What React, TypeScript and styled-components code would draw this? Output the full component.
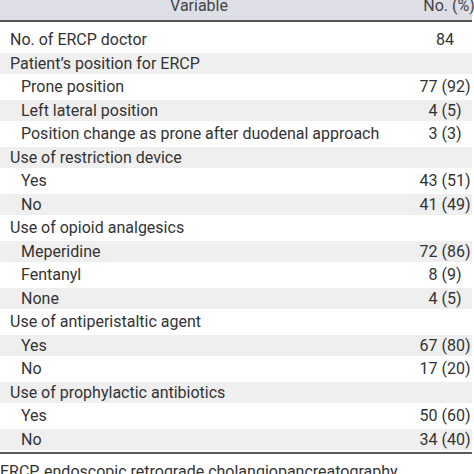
import React from "react";
import styled, { createGlobalStyle } from "styled-components";

const Global = createGlobalStyle`
  html, body {
    margin: 0;
    padding: 0;
    background: #fff;
    overflow: hidden;
  }
  body {
    font-family: Roboto, "Liberation Sans", sans-serif;
    color: #333;
  }
`;

const TableWrapper = styled.div`
  width: 472px;
  margin-top: -9px;
`;

const HeaderRow = styled.div`
  display: flex;
  align-items: center;
  height: 29px;
  background: #dedee6;
  border-bottom: 2px solid #555;
  font-size: 16px;
  color: #444;
`;

const HeaderLabel = styled.div`
  flex: 1;
  text-align: center;
  padding-right: 24px;
`;

const HeaderValue = styled.div`
  width: 54px;
  margin-right: -4px;
  text-align: center;
  white-space: nowrap;
`;

const Body = styled.div`
  padding-top: 5px;
  padding-bottom: 2px;
  border-bottom: 2px solid #5a5a5a;
`;

const Row = styled.div<{ $shade: boolean }>`
  display: flex;
  align-items: center;
  height: 21.5px;
  border-top: 2px solid #fff;
  background: ${(p) => (p.$shade ? "#efefef" : "#fff")};
  font-size: 16px;
`;

const Label = styled.div<{ $indent: boolean }>`
  flex: 1;
  padding-left: ${(p) => (p.$indent ? "21px" : "10px")};
  white-space: nowrap;
`;

const Value = styled.div`
  width: 54px;
  text-align: center;
  white-space: nowrap;
`;

const Footnote = styled.div`
  margin-top: 8px;
  font-size: 16px;
  color: #333;
  white-space: nowrap;
`;

const rows: [string, string, boolean][] = [
  ["No. of ERCP doctor", "84", false],
  ["Patient\u2019s position for ERCP", "", false],
  ["Prone position", "77 (92)", true],
  ["Left lateral position", "4 (5)", true],
  ["Position change as prone after duodenal approach", "3 (3)", true],
  ["Use of restriction device", "", false],
  ["Yes", "43 (51)", true],
  ["No", "41 (49)", true],
  ["Use of opioid analgesics", "", false],
  ["Meperidine", "72 (86)", true],
  ["Fentanyl", "8 (9)", true],
  ["None", "4 (5)", true],
  ["Use of antiperistaltic agent", "", false],
  ["Yes", "67 (80)", true],
  ["No", "17 (20)", true],
  ["Use of prophylactic antibiotics", "", false],
  ["Yes", "50 (60)", true],
  ["No", "34 (40)", true],
];

export default function App() {
  return (
    <>
      <Global />
      <TableWrapper>
        <HeaderRow>
          <HeaderLabel>Variable</HeaderLabel>
          <HeaderValue>No. (%)</HeaderValue>
        </HeaderRow>
        <Body>
          {rows.map(([label, value, indent], i) => (
            <Row key={i} $shade={i % 2 === 1}>
              <Label $indent={indent}>{label}</Label>
              <Value>{value}</Value>
            </Row>
          ))}
        </Body>
      </TableWrapper>
      <Footnote>ERCP, endoscopic retrograde cholangiopancreatography.</Footnote>
    </>
  );
}
